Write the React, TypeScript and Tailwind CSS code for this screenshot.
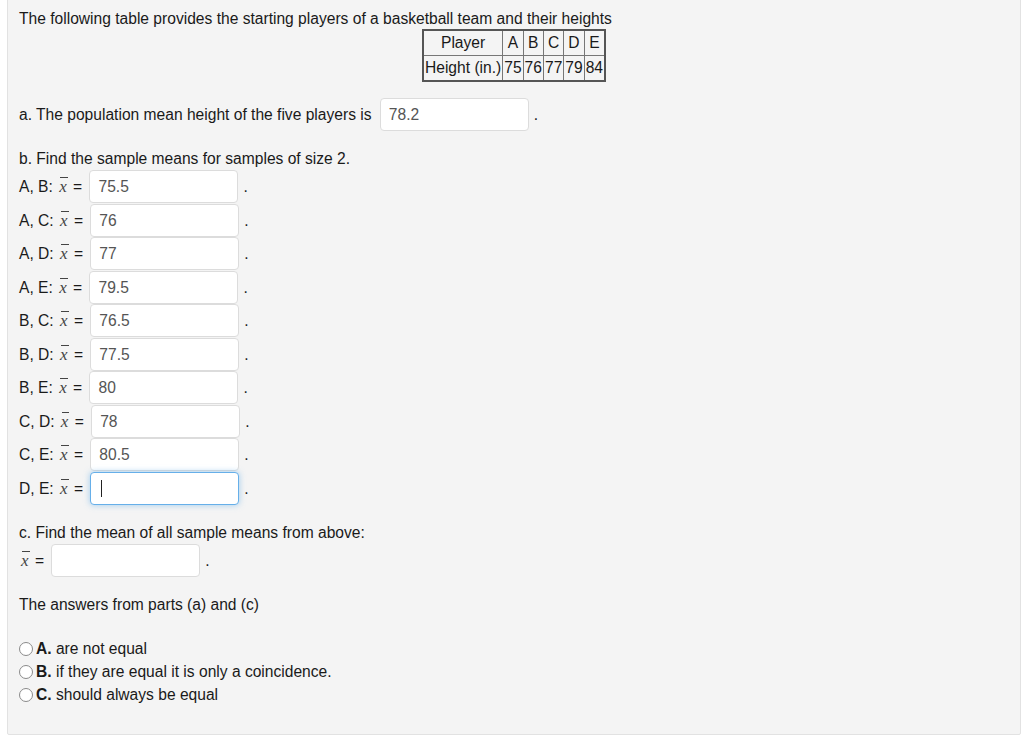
import React from "react";

const Xbar = () => (
  <span
    className="relative inline-block text-[#444] px-[2px]"
    style={{ fontFamily: "'Liberation Serif', 'DejaVu Serif', serif", fontStyle: "italic" }}
  >
    <span className="text-[17px] italic">x</span>
    <span className="absolute left-[3px] right-[1px] top-[3px] h-[1px] bg-[#444]" />
  </span>
);

const Field = ({ value, focused }: { value?: string; focused?: boolean }) => (
  <div
    className={
      "w-[149px] h-[33px] shrink-0 rounded-[4px] bg-white flex items-center pl-[8px] text-[15.6px] text-[#555] " +
      (focused
        ? "border border-[#66afe9] shadow-[0_0_6px_rgba(102,175,233,0.6)]"
        : "border border-[#dcdcdc]")
    }
  >
    {focused ? <span className="w-[1px] h-[17px] bg-[#222] ml-[2px]" /> : value}
  </div>
);

const rows: [string, string][] = [
  ["A, B", "75.5"],
  ["A, C", "76"],
  ["A, D", "77"],
  ["A, E", "79.5"],
  ["B, C", "76.5"],
  ["B, D", "77.5"],
  ["B, E", "80"],
  ["C, D", "78"],
  ["C, E", "80.5"],
  ["D, E", ""],
];

const Radio = ({ letter, text }: { letter: string; text: string }) => (
  <div className="flex items-center h-[23px]">
    <span className="w-[14px] h-[14px] rounded-full border border-[#8a8a8a] bg-white mr-[3px]" />
    <span className="font-bold">{letter}</span>
    <span>&nbsp;{text}</span>
  </div>
);

export default function App() {
  return (
    <div
      className="w-[1024px] h-[742px] bg-white text-[15.6px] text-[#1a1a1a]"
      style={{ fontFamily: "'Liberation Sans', Arial, sans-serif" }}
    >
      <div className="ml-[7px] w-[1014px] h-[736px] -mt-[1px] bg-[#f4f4f4] border border-[#e2e2e2] rounded-b-[2px] pl-[11px] pr-[11px] pt-[10px]">
        <div className="leading-[18px] whitespace-nowrap">
          The following table provides the starting players of a basketball team and their heights
        </div>
        <div className="flex justify-center mt-[1px]">
          <table className="border-collapse border-2 border-[#555] leading-[24px] whitespace-nowrap">
            <tbody>
              <tr>
                <td className="border border-[#777] px-[2px] text-center">Player</td>
                {["A", "B", "C", "D", "E"].map((c) => (
                  <td key={c} className="border border-[#777] px-[2px] text-center">
                    {c}
                  </td>
                ))}
              </tr>
              <tr>
                <td className="border border-[#777] px-[1px]">Height (in.)</td>
                {["75", "76", "77", "79", "84"].map((c) => (
                  <td key={c} className="border border-[#777] px-[1px] text-center">
                    {c}
                  </td>
                ))}
              </tr>
            </tbody>
          </table>
        </div>

        <div className="flex items-center mt-[16px] h-[33px] whitespace-nowrap">
          <span className="mr-[4px]">a. The population mean height of the five players is&nbsp;</span>
          <Field value="78.2" />
          <span className="ml-[5px]">.</span>
        </div>

        <div className="mt-[19px] leading-[18px]">b. Find the sample means for samples of size 2.</div>
        <div className="mt-[2px] flex flex-col">
          {rows.map(([l, v], i) => (
            <div key={l} className="flex items-center h-[33.5px] whitespace-nowrap">
              <span className="mr-[3px]">
                {l}: <Xbar /> =&nbsp;
              </span>
              <Field value={v} focused={i === rows.length - 1} />
              <span className="ml-[5px]">.</span>
            </div>
          ))}
        </div>

        <div className="mt-[19px] leading-[18px]">c. Find the mean of all sample means from above:</div>
        <div className="flex items-center mt-[2px] h-[33px] whitespace-nowrap">
          <span className="mr-[3px]">
            <Xbar /> =&nbsp;
          </span>
          <Field value="" />
          <span className="ml-[5px]">.</span>
        </div>

        <div className="mt-[19px] leading-[18px]">The answers from parts (a) and (c)</div>

        <div className="mt-[23px] flex flex-col">
          <Radio letter="A." text="are not equal" />
          <Radio letter="B." text="if they are equal it is only a coincidence." />
          <Radio letter="C." text="should always be equal" />
        </div>
      </div>
    </div>
  );
}
